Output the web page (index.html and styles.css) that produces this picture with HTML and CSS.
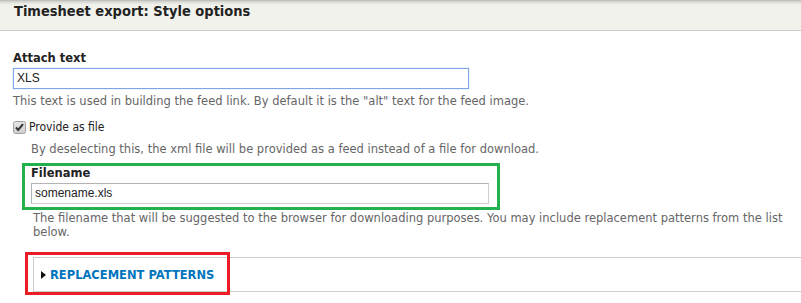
FILE: index.html
```html
<!DOCTYPE html>
<html>
<head>
<meta charset="utf-8">
<title>Timesheet export: Style options</title>
<link rel="stylesheet" href="styles.css">
</head>
<body>
<div class="header">
  <h1 class="title">Timesheet export: Style options</h1>
</div>
<div class="content">
  <div class="item">
    <label class="label">Attach text</label>
    <div class="input focused">XLS</div>
    <div class="desc">This text is used in building the feed link. By default it is the "alt" text for the feed image.</div>
  </div>
  <div class="check-item">
    <div class="check-row">
      <svg class="checkbox" width="13" height="13" viewBox="0 0 13 13">
        <defs>
          <linearGradient id="cb" x1="0" y1="0" x2="0" y2="1">
            <stop offset="0" stop-color="#e6e6e6"/>
            <stop offset="1" stop-color="#cfcfcf"/>
          </linearGradient>
        </defs>
        <rect x="0.5" y="0.5" width="12" height="12" rx="2" fill="url(#cb)" stroke="#a0a0a0"/>
        <path d="M3 6.5 L5.2 9 L10 3.2" fill="none" stroke="#333" stroke-width="2"/>
      </svg>
      <span class="check-label">Provide as file</span>
    </div>
    <div class="desc sub">By deselecting this, the xml file will be provided as a feed instead of a file for download.</div>
    <div class="sub-item">
      <div class="highlight">
        <span class="mark green"></span>
        <label class="label">Filename</label>
        <div class="input plain">somename.xls</div>
      </div>
      <div class="desc fdesc">The filename that will be suggested to the browser for downloading purposes. You may include replacement patterns from the list below.</div>
    </div>
    <div class="fieldset">
      <span class="mark red"></span>
      <div class="legend">
        <svg class="tri" width="5" height="8" viewBox="0 0 5 8"><path d="M0 0 L5 4 L0 8 Z" fill="#111"/></svg>
        <span class="legend-text">REPLACEMENT PATTERNS</span>
      </div>
    </div>
  </div>
</div>
</body>
</html>
```

FILE: styles.css
```css
html, body {
  margin: 0;
  padding: 0;
  overflow: hidden;
  background: #fff;
}
body {
  font-family: "DejaVu Sans", sans-serif;
  color: #333;
  width: 801px;
  height: 303px;
}
.header {
  box-sizing: border-box;
  height: 31px;
  border-bottom: 1px solid #cacaca;
  background: linear-gradient(#b9b9b5 0px, #dcdcd8 2px, #f2f2ed 5px, #f2f2ed 100%);
  padding-left: 14px;
}
.title {
  margin: 0;
  font-family: "DejaVu Sans Condensed", "DejaVu Sans", sans-serif;
  font-size: 14.5px;
  font-weight: bold;
  color: #222;
  line-height: 18px;
  padding-top: 2px;
}
.content {
  padding: 0 0 0 13px;
}
.item {
  padding-top: 19px;
}
.label {
  display: block;
  font-size: 11.5px;
  font-weight: bold;
  line-height: 16px;
  color: #222;
}
.input {
  box-sizing: border-box;
  height: 21px;
  border: 1px solid #ccc;
  font-family: "Liberation Sans", Arial, sans-serif;
  font-size: 12px;
  color: #222;
  line-height: 19px;
  padding-left: 3px;
  margin-top: 2px;
}
.input.focused {
  width: 456px;
  border: 1px solid #7ea5e6;
  box-shadow: 0 0 1px #9dbcf0;
}
.input.plain {
  width: 458px;
  border-color: #b3b3b3 #cfcfcf #cfcfcf #b3b3b3;
}
.desc {
  font-size: 11.5px;
  line-height: 14px;
  color: #666;
  margin-top: 5px;
}
.check-item {
  padding-top: 12px;
}
.check-row {
  display: flex;
  align-items: center;
  gap: 3px;
  height: 15px;
}
.checkbox {
  display: block;
  flex: none;
}
.check-label {
  font-family: "DejaVu Sans Condensed", "DejaVu Sans", sans-serif;
  font-size: 12px;
  line-height: 15px;
  color: #222;
}
.sub {
  margin-left: 18px;
  margin-top: 7px;
}
.sub-item {
  margin-left: 18px;
  margin-top: 9px;
}
.highlight {
  position: relative;
  width: 458px;
}
.mark {
  position: absolute;
  box-sizing: border-box;
  border: 3px solid;
  pointer-events: none;
}
.mark.green {
  border-color: #22b14c;
  left: -9px;
  top: -2px;
  width: 478px;
  height: 47px;
}
.fdesc {
  margin-top: 7px;
  margin-left: 2px;
  max-width: 762px;
}
.fieldset {
  position: relative;
  margin-left: 20px;
  margin-top: 18px;
  margin-right: -6px;
  height: 35px;
  box-sizing: border-box;
  border: 1px solid #cccccc;
  border-right: 0;
}
.mark.red {
  border-color: #ed1c24;
  left: -9px;
  top: -6px;
  width: 205px;
  height: 43px;
}
.legend {
  display: flex;
  align-items: center;
  gap: 4px;
  padding-left: 7px;
  height: 33px;
}
.tri {
  display: block;
}
.legend-text {
  font-size: 11.5px;
  font-weight: bold;
  color: #0074bd;
  line-height: 16px;
}
```
